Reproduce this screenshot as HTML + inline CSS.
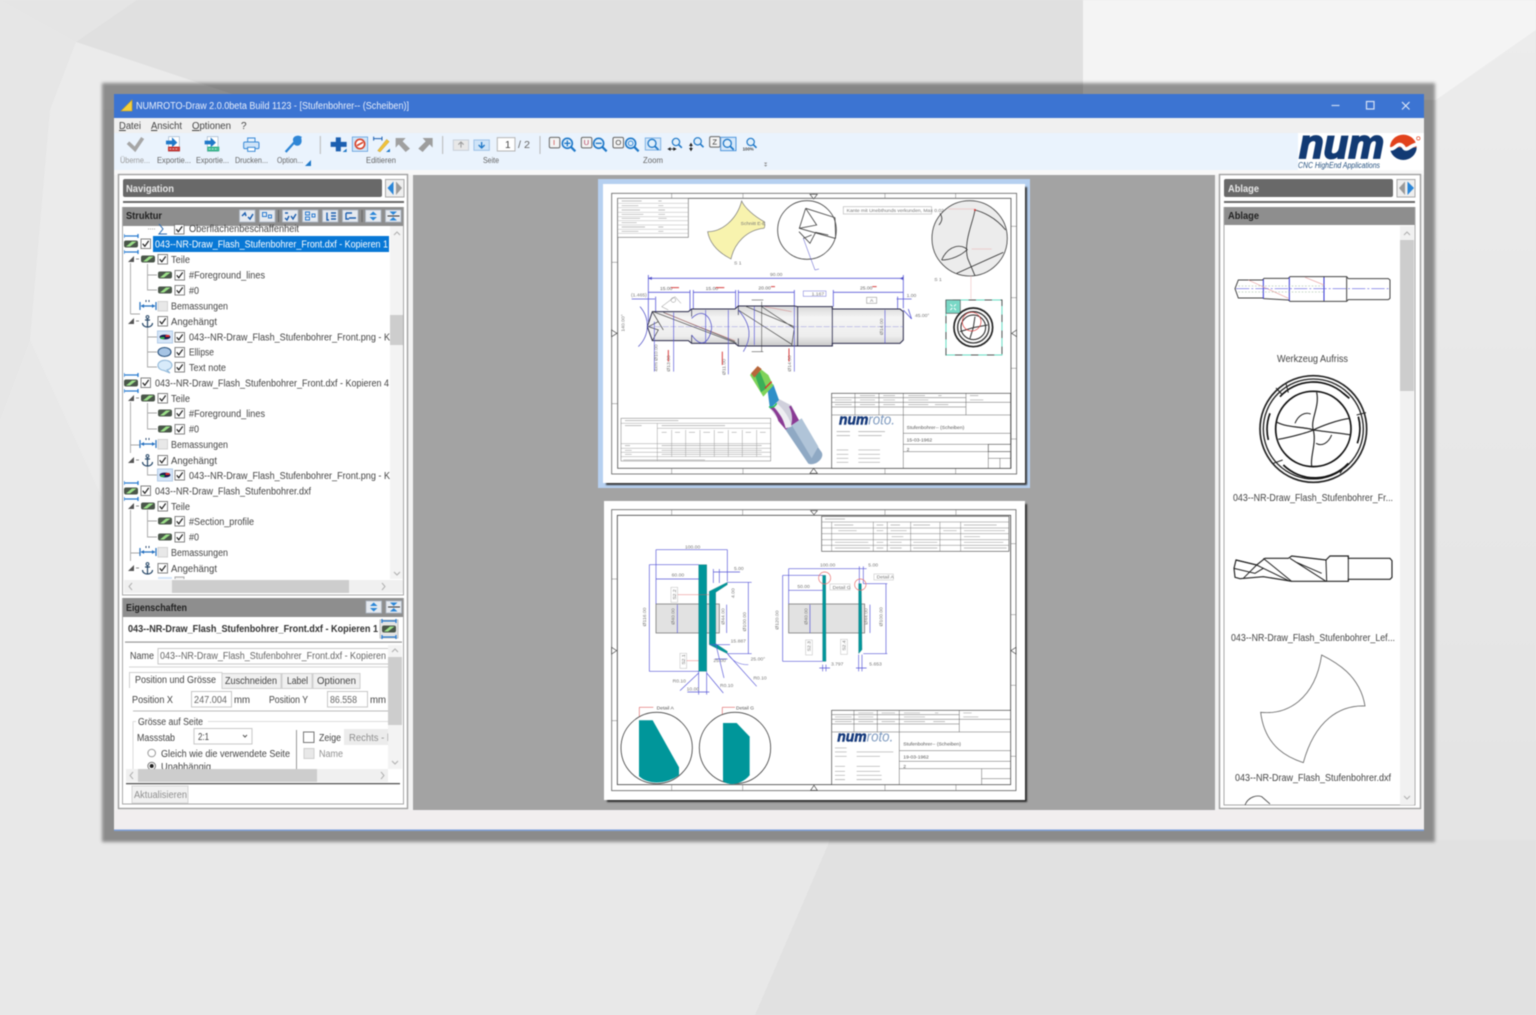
<!DOCTYPE html>
<html lang="de"><head><meta charset="utf-8"><title>NUMROTO-Draw</title>
<style>
html,body{margin:0;padding:0;width:1536px;height:1015px;overflow:hidden;background:#e8e8e8}
svg{display:block;filter:blur(.4px)}
text{font-family:"Liberation Sans",sans-serif;font-size:10px;fill:#444}
.b{font-weight:700}
.h{font-weight:700;fill:#e8e8e8}
.d{fill:#222;font-weight:700}
.g{fill:#8f8f8f}
.t{font-size:8px;fill:#666}
.tiny{font-size:15px;fill:#777}
.mic{font-size:10px;fill:#999}
.dm{fill:none;stroke:#5858d8;stroke-width:2.4}
.k{fill:none;stroke:#444;stroke-width:2.5}
.f{fill:none;stroke:#888;stroke-width:1.5}
</style></head><body>
<svg width="1536" height="1015" viewBox="0 0 1536 1015" xmlns="http://www.w3.org/2000/svg">
<defs>
<filter id="bl" x="-5%" y="-5%" width="110%" height="110%"><feGaussianBlur stdDeviation="1.6"/></filter>
<filter id="b1" x="-5%" y="-5%" width="110%" height="110%"><feGaussianBlur stdDeviation=".9"/></filter>
<linearGradient id="bd" x1="0" y1="0" x2="0" y2="1"><stop offset="0" stop-color="#d8d8d8"/><stop offset=".3" stop-color="#f5f5f5"/><stop offset=".75" stop-color="#eee"/><stop offset="1" stop-color="#c9c9c9"/></linearGradient>
<linearGradient id="sh" x1="0" y1="0" x2="1" y2="0"><stop offset="0" stop-color="#a9c0d8"/><stop offset="1" stop-color="#7d98b5"/></linearGradient>
<linearGradient id="rg" x1="0" y1="0" x2="0" y2="1"><stop offset="0" stop-color="#ececec"/><stop offset="1" stop-color="#e2e2e2"/></linearGradient>
<clipPath id="tc"><rect x="124" y="224" width="266" height="355"/></clipPath>
<clipPath id="pc"><rect x="124" y="645" width="264" height="124"/></clipPath>
<clipPath id="rc"><rect x="1225" y="226" width="175" height="579"/></clipPath>
<g id="ly"><rect x="0" y="-3.5" width="14" height="7" rx="2" fill="#4a564a"/><path d="M2,2.5 L8,-2.5 L12.5,-2.5 L6,2.5Z" fill="#9be088"/></g>
<g id="l0"><use href="#ly"/><path d="M0,-8H14M0,8H14M0,-10V-6M14,-10V-6M0,6V10M14,6V10" stroke="#2a7cd0" stroke-width="1.3" fill="none"/></g>
<g id="cb"><rect x=".5" y="-4.5" width="9.5" height="9.5" fill="#fff" stroke="#777" stroke-width=".9"/><path d="M2.2,.2 L4.3,2.8 L8.2,-2.6" stroke="#222" stroke-width="1.2" fill="none"/></g>
<g id="cg"><rect x=".5" y="-4.5" width="9.5" height="9.5" fill="#e8e8e8" stroke="#d2d2d2"/></g>
<g id="tr"><path d="M0,3 L6,3 L6,-3Z" fill="#555"/><path d="M8,0H11" stroke="#888"/></g>
<g id="dm"><path d="M0,-4V4M16,-4V4M1,0H15" stroke="#2470c0" stroke-width="1.2"/><path d="M1,0L4,-2V2ZM15,0L12,-2V2Z" fill="#2470c0"/><path d="M6,-6V-4M9,-6V-4" stroke="#2a4a70"/></g>
<g id="an"><circle cx="0" cy="-5" r="1.4" fill="none" stroke="#2a4a6a"/><path d="M0,-4V5M-2.5,-2H2.5M-5,1C-5,4 -2,5 0,5C2,5 5,4 5,1" stroke="#2a4a6a" stroke-width="1.2" fill="none"/></g>
<g id="pn"><rect x="0" y="-6" width="15" height="12" fill="#d6e6f8" stroke="#b3cce8"/><ellipse cx="7.5" cy="0" rx="5.5" ry="2.4" fill="#1a1a50"/><path d="M3,0h4v2h-4z" fill="#2db04a"/><path d="M8,-2h4v2h-4z" fill="#d82a2a"/></g>
<g id="bt"><rect x="0" y="0" width="15.5" height="12" fill="#e6eaf0" stroke="#aeb8c6" stroke-width=".8"/></g>
<g id="ud"><rect x="0" y="0" width="15.5" height="12" fill="#e6eaf0" stroke="#aeb8c6" stroke-width=".8"/><path d="M7.7,1.5L11.5,5H4ZM7.7,10.5L11.5,7H4Z" fill="#2a86d8"/></g>
<g id="cl"><rect x="0" y="0" width="15.5" height="12" fill="#e6eaf0" stroke="#aeb8c6" stroke-width=".8"/><path d="M2,6H14" stroke="#333" stroke-width="1"/><path d="M7.7,5L11.5,1.5H4ZM7.7,7L11.5,10.5H4Z" fill="#2a86d8"/></g>
<g id="mg"><circle cx="0" cy="0" r="5" fill="#e0effb" stroke="#1f78c8" stroke-width="1.6"/><path d="M3.5,3.5L8,8" stroke="#1f78c8" stroke-width="2.2"/></g>
<g id="bx"><rect x="0" y="0" width="10.5" height="10.5" rx="1.5" fill="#f4f4f4" stroke="#666" stroke-width="1"/></g>
</defs>

<!-- background -->
<rect width="1536" height="1015" fill="#e8e8e8"/>
<polygon points="0,0 137,0 76,42" fill="#e5e5e5"/>
<polygon points="137,0 1083,0 1083,100 250,100 76,42" fill="#e0e0e0"/>
<polygon points="0,0 76,42 50,110 30,340 0,420" fill="#e6e6e6"/>
<polygon points="76,42 250,100 103,110 50,110" fill="#ebebeb"/>
<polygon points="50,110 103,110 103,500 30,340" fill="#ebebeb"/>
<polygon points="1083,0 1536,0 1536,30 1436,100 1083,100" fill="#f4f4f4"/>
<polygon points="1536,30 1436,100 1436,1015 1536,1015" fill="url(#rg)"/>
<polygon points="830,840 1536,840 1536,1015 755,1015" fill="#e1e1e1"/>

<!-- window shadow -->
<rect x="102" y="83" width="1333" height="759" fill="#000" fill-opacity=".4" filter="url(#bl)"/>

<!-- window -->
<rect x="114" y="94" width="1310" height="737" fill="#f3f3f3"/>
<rect x="114" y="94" width="1310" height="24" fill="#3c74d2"/>
<rect x="114" y="118" width="1310" height="15" fill="#f0f0f0"/>
<rect x="114" y="133" width="1310" height="37" fill="#eaf3fd"/>
<rect x="114" y="170" width="1310" height="5" fill="#f8f8f8"/>
<rect x="114" y="810" width="1310" height="20" fill="#f1eeef"/>
<rect x="114" y="829.5" width="1310" height="1.5" fill="#7d9fd8"/>

<!-- title -->
<polygon points="121,111 132,100 132,111" fill="#f5cf3a" stroke="#c9a020" stroke-width=".6"/>
<text x="136" y="109" style="fill:#e8effb" textLength="273" lengthAdjust="spacingAndGlyphs">NUMROTO-Draw 2.0.0beta Build 1123 - [Stufenbohrer-- (Scheiben)]</text>
<path d="M1331.5,105.5H1339.5" stroke="#c8d8f2" stroke-width="1.2"/>
<rect x="1366.5" y="101.5" width="7.5" height="7.5" fill="none" stroke="#d6e2f6" stroke-width="1.2"/>
<path d="M1402,102L1409.5,109.5M1409.5,102L1402,109.5" stroke="#dbe6f7" stroke-width="1.2"/>

<!-- menu -->
<g fill="#444">
<text x="119" y="129" textLength="22" lengthAdjust="spacingAndGlyphs"><tspan text-decoration="underline">D</tspan>atei</text>
<text x="151" y="129" textLength="31" lengthAdjust="spacingAndGlyphs"><tspan text-decoration="underline">A</tspan>nsicht</text>
<text x="192" y="129" textLength="39" lengthAdjust="spacingAndGlyphs"><tspan text-decoration="underline">O</tspan>ptionen</text>
<text x="241" y="129">?</text>
</g>

<!-- ribbon -->
<g transform="translate(100,80) scale(.3333)">
<path d="M84,188 L105,208 L128,174" fill="none" stroke="#a6a6a6" stroke-width="11"/>
<rect x="206" y="170" width="32" height="44" fill="#fff" stroke="#9fb2c8" stroke-width="2"/><path d="M198,182H216V172L232,188L216,202V193H198Z" fill="#1f78c8"/><rect x="204" y="200" width="36" height="14" fill="#c4332f"/><path d="M208,207H236" stroke="#f3c0c0" stroke-width="3" stroke-dasharray="6 3"/>
<rect x="322" y="170" width="32" height="44" fill="#fff" stroke="#9fb2c8" stroke-width="2"/><path d="M314,182H332V172L348,188L332,202V193H314Z" fill="#1f78c8"/><rect x="322" y="200" width="36" height="14" fill="#35b58a"/><path d="M326,207H354" stroke="#c5efdf" stroke-width="3" stroke-dasharray="6 3"/>
<rect x="443" y="174" width="22" height="14" fill="#e8f2fc" stroke="#3a8ad6" stroke-width="3"/><rect x="431" y="186" width="46" height="20" rx="4" fill="#cfe4f8" stroke="#3a8ad6" stroke-width="3"/><rect x="443" y="202" width="22" height="12" fill="#fff" stroke="#3a8ad6" stroke-width="3"/>
<path d="M557,216 L584,186 M584,186 C578,172 592,168 600,172 L590,181 L594,187 L601,178 C604,192 592,198 584,190" stroke="#2f86d6" stroke-width="7" fill="#2f86d6"/>
<path d="M661,168V222" stroke="#b8b8b8" stroke-width="3"/>
<path d="M715,172V214M692,193H740" stroke="#1c5fb0" stroke-width="15"/>
<path d="M728,216L740,216L740,206Z" fill="#1f78c8"/>
<rect x="757" y="171" width="46" height="43" fill="#cfe4f8" stroke="#4b92d8" stroke-width="2"/><circle cx="780" cy="192" r="14" fill="#fff" stroke="#d8432a" stroke-width="5"/><path d="M771,197L789,187" stroke="#d8432a" stroke-width="5"/>
<path d="M821,176H846M821,170V182M846,170V182" stroke="#1c5fb0" stroke-width="3"/>
<path d="M833,212L860,178L868,185L840,216Z" fill="#f0c23a" stroke="#a88520" stroke-width="1"/>
<path d="M858,216L870,216L870,206Z" fill="#1f78c8"/>
<path d="M887,174H917L908,184L930,206L917,216L896,193L887,203Z" fill="#a0a0a0"/>
<path d="M998,174H968L977,184L955,206L968,216L989,193L998,203Z" fill="#9d9d9d"/>
<path d="M1028,168V222" stroke="#b8b8b8" stroke-width="3"/>
<rect x="1060" y="180" width="46" height="31" fill="#e8e8e8" stroke="#c8d0da" stroke-width="3"/><path d="M1083,186V203M1075,194L1083,186L1091,194" stroke="#999" stroke-width="3" fill="none"/>
<rect x="1122" y="180" width="46" height="31" fill="#cfe4f8" stroke="#9ec2e8" stroke-width="3"/><path d="M1145,186V203M1136,195L1145,204L1154,195" stroke="#1f78c8" stroke-width="4" fill="none"/>
<rect x="1192" y="173" width="53" height="40" fill="#fff" stroke="#b5b5b5" stroke-width="3"/>
</g>
<text x="505" y="148" style="fill:#444">1</text>
<text x="518" y="148" style="fill:#666" textLength="12" lengthAdjust="spacingAndGlyphs">/ 2</text>
<g transform="translate(520,80) scale(.3333)">
<path d="M60,168V222" stroke="#b8b8b8" stroke-width="3"/>
<use href="#bx" transform="translate(88,172) scale(3)"/><text x="99" y="195" style="font-size:23px;fill:#d05050">I</text><use href="#mg" transform="translate(142,190) scale(3)"/><path d="M133,190H151M142,181V199" stroke="#1f78c8" stroke-width="4"/>
<use href="#bx" transform="translate(184,172) scale(3)"/><text x="191" y="195" style="font-size:23px;fill:#b04060">U</text><use href="#mg" transform="translate(236,190) scale(3)"/><path d="M227,190H245" stroke="#1f78c8" stroke-width="4"/>
<use href="#bx" transform="translate(279,172) scale(3)"/><text x="286" y="195" style="font-size:23px;fill:#444">O</text><use href="#mg" transform="translate(332,190) scale(3)"/><circle cx="332" cy="190" r="7" fill="none" stroke="#3a8ad6" stroke-width="3"/>
<rect x="376" y="174" width="46" height="36" fill="#d6e8fa" stroke="#7eb2e4" stroke-width="3"/><use href="#mg" transform="translate(396,190) scale(2.4)"/>
<use href="#mg" transform="translate(468,186) scale(2.2)"/><path d="M444,207H468M444,207L451,203V211ZM468,207L461,203V211Z" stroke="#222" stroke-width="2"/>
<use href="#mg" transform="translate(533,184) scale(2.2)"/><path d="M513,190V212M513,190L509,197H517ZM513,212L509,205H517Z" stroke="#222" stroke-width="2"/>
<use href="#bx" transform="translate(569,170) scale(3)"/><text x="577" y="193" style="font-size:23px;fill:#333">Z</text><rect x="602" y="172" width="46" height="40" fill="#d6e8fa" stroke="#4f96dc" stroke-width="3"/><use href="#mg" transform="translate(622,190) scale(2.4)"/>
<use href="#mg" transform="translate(692,186) scale(2.2)"/><text x="668" y="212" style="font-size:13px;font-weight:700;fill:#444">100%</text>
<path d="M732,248H742L737,253ZM732,255H742L737,260Z" fill="#888"/>
</g>
<g text-anchor="start">
<text class="t" style="fill:#9a9a9a" x="120" y="163" textLength="30" lengthAdjust="spacingAndGlyphs">Überne...</text>
<text class="t" x="157" y="163" textLength="34" lengthAdjust="spacingAndGlyphs">Exportie...</text>
<text class="t" x="196" y="163" textLength="33" lengthAdjust="spacingAndGlyphs">Exportie...</text>
<text class="t" x="235" y="163" textLength="33" lengthAdjust="spacingAndGlyphs">Drucken...</text>
<text class="t" x="277" y="163" textLength="26" lengthAdjust="spacingAndGlyphs">Option...</text>
<text class="t" x="366" y="163" textLength="30" lengthAdjust="spacingAndGlyphs">Editieren</text>
<text class="t" x="483" y="163" textLength="16" lengthAdjust="spacingAndGlyphs">Seite</text>
<text class="t" x="643" y="163" textLength="20" lengthAdjust="spacingAndGlyphs">Zoom</text>
</g>
<path d="M305,166H311V160Z" fill="#1f78c8"/>

<!-- logo -->
<rect x="1298" y="133" width="126" height="37" fill="#fff"/>
<text x="1299" y="158" style="font-size:41px;font-weight:700;font-style:italic;fill:#123a73;stroke:#123a73;stroke-width:1.8" textLength="85" lengthAdjust="spacingAndGlyphs">num</text>
<text x="1298" y="168" style="font-size:8px;font-style:italic;fill:#24507f" textLength="82" lengthAdjust="spacingAndGlyphs">CNC HighEnd Applications</text>
<g transform="translate(1200,85) scale(.3333)">
<path d="M570,187 A40,38 0 0 1 650,187Z" fill="#e2421c"/>
<path d="M570,187 A40,38 0 0 0 650,187Z" fill="#123a73"/>
<path d="M566,190 C585,200 592,165 610,185 C620,205 635,175 654,178" stroke="#fff" stroke-width="11" fill="none"/>
<circle cx="655" cy="160" r="5" fill="none" stroke="#e2421c" stroke-width="2"/>
</g>

<!-- left panel -->
<rect x="118.5" y="174.5" width="289" height="634" fill="#fff" stroke="#a0a0a0" stroke-width="1.4"/>
<rect x="123" y="179" width="259" height="18" rx="2" fill="#696969"/>
<text class="h" x="126" y="192" textLength="48" lengthAdjust="spacingAndGlyphs">Navigation</text>
<rect x="385.5" y="179.5" width="18.5" height="17.5" fill="#eee" stroke="#a8a8a8"/>
<path d="M393.5,181.5V195L387.5,188Z" fill="#2a86d8"/><path d="M396,181.5V195L402,188Z" fill="#9a9a9a"/>
<rect x="123" y="201" width="281" height="2" fill="#6a6a6a"/>
<rect x="123" y="207" width="280.5" height="19" fill="#8e8e8e"/>
<text class="d" x="126" y="219" textLength="36" lengthAdjust="spacingAndGlyphs">Struktur</text>
<use href="#bt" x="239.5" y="210"/><path d="M242,216L245,213L246,216M248,217L250,219L253,214" stroke="#1c5fb0" stroke-width="1.5" fill="none"/>
<use href="#bt" x="259.5" y="210"/><path d="M262.5,212.5h4v4h-4zM268.5,215h3v3h-3z" fill="none" stroke="#2a7ad0"/>
<path d="M278.5,210V222" stroke="#666"/>
<use href="#bt" x="282.5" y="210"/><path d="M285,213h3M285,218L287,220L289,216M291,216L293,219L296,214" stroke="#1c5fb0" stroke-width="1.4" fill="none"/>
<use href="#bt" x="302.5" y="210"/><path d="M305.5,212h4v3h-4zM305.5,217h4v3h-4zM312,214h3v3h-3z" fill="none" stroke="#2a7ad0"/>
<use href="#bt" x="322.5" y="210"/><path d="M327,212.5V220H329M331,213H336M331,216H336M331,219H336" stroke="#1c5fb0" stroke-width="1.4" fill="none"/>
<use href="#bt" x="342.5" y="210"/><path d="M346,213H352M349,218H356M346,213V219H349" stroke="#1c5fb0" stroke-width="1.4" fill="none"/>
<path d="M362,210V222" stroke="#666"/>
<use href="#ud" x="365.5" y="210"/><use href="#cl" x="385.5" y="210"/>

<!-- tree -->
<g clip-path="url(#tc)">
<rect x="153" y="236" width="236" height="16" fill="#0878d6"/>
<path d="M130.5,263V314M130.5,314H140M147.5,264V290H157M147.5,275H157M147.5,325V367H157M147.5,337H157M147.5,352H157M130.5,402V453M130.5,445H140M147.5,403V429H157M147.5,413H157M147.5,464V475H157M130.5,510V561M130.5,553H140M147.5,510V537H157M147.5,521H157" stroke="#a8a8a8" stroke-width=".9" fill="none"/>
<!-- row clipped top -->
<path d="M148,229H156" stroke="#aaa" stroke-dasharray="1 1"/><path d="M159,224L163,229L159,234H167" stroke="#2a6ab0" fill="none"/>
<use href="#cb" x="174" y="229"/><text x="189" y="232" textLength="110" lengthAdjust="spacingAndGlyphs">Oberflächenbeschaffenheit</text>

<use href="#l0" x="124" y="244"/><use href="#cb" x="140.5" y="243.5"/>
<text x="155" y="247.5" style="fill:#fff" textLength="233" lengthAdjust="spacingAndGlyphs">043--NR-Draw_Flash_Stufenbohrer_Front.dxf - Kopieren 1</text>
<use href="#tr" x="128" y="259"/><use href="#ly" x="141" y="259"/><use href="#cb" x="157.5" y="259"/><text x="171" y="263" textLength="19" lengthAdjust="spacingAndGlyphs">Teile</text>
<use href="#ly" x="158" y="275"/><use href="#cb" x="174.5" y="275"/><text x="189" y="278.5" textLength="76" lengthAdjust="spacingAndGlyphs">#Foreground_lines</text>
<use href="#ly" x="158" y="290"/><use href="#cb" x="174.5" y="290"/><text x="189" y="294" textLength="10" lengthAdjust="spacingAndGlyphs">#0</text>
<use href="#dm" x="140" y="306"/><use href="#cg" x="157.5" y="306"/><text x="171" y="309.5" textLength="57" lengthAdjust="spacingAndGlyphs">Bemassungen</text>
<use href="#tr" x="128" y="321"/><use href="#an" x="147.5" y="322"/><use href="#cb" x="157.5" y="321"/><text x="171" y="325" textLength="46" lengthAdjust="spacingAndGlyphs">Angehängt</text>
<use href="#pn" x="157.5" y="337"/><use href="#cb" x="174.5" y="337"/><text x="189" y="340.5" textLength="201" lengthAdjust="spacingAndGlyphs">043--NR-Draw_Flash_Stufenbohrer_Front.png - K</text>
<ellipse cx="164.5" cy="352" rx="6.5" ry="4.5" fill="#a6c4e4" stroke="#27507c" stroke-width="1.1"/><use href="#cb" x="174.5" y="352"/><text x="189" y="355.5" textLength="25" lengthAdjust="spacingAndGlyphs">Ellipse</text>
<path d="M158,366 a7,5 0 1 1 9,4 l3,3 l-6,-2.5 a7,5 0 0 1 -6,-4.5Z" fill="#d8ebfa" stroke="#8eb6d8"/><use href="#cb" x="174.5" y="367"/><text x="189" y="371" textLength="37" lengthAdjust="spacingAndGlyphs">Text note</text>

<use href="#l0" x="124" y="383"/><use href="#cb" x="140.5" y="382.5"/><text x="155" y="386.5" textLength="234" lengthAdjust="spacingAndGlyphs">043--NR-Draw_Flash_Stufenbohrer_Front.dxf - Kopieren 4</text>
<use href="#tr" x="128" y="398"/><use href="#ly" x="141" y="398"/><use href="#cb" x="157.5" y="398"/><text x="171" y="402" textLength="19" lengthAdjust="spacingAndGlyphs">Teile</text>
<use href="#ly" x="158" y="413"/><use href="#cb" x="174.5" y="413"/><text x="189" y="417" textLength="76" lengthAdjust="spacingAndGlyphs">#Foreground_lines</text>
<use href="#ly" x="158" y="429"/><use href="#cb" x="174.5" y="429"/><text x="189" y="432.5" textLength="10" lengthAdjust="spacingAndGlyphs">#0</text>
<use href="#dm" x="140" y="444"/><use href="#cg" x="157.5" y="444"/><text x="171" y="448" textLength="57" lengthAdjust="spacingAndGlyphs">Bemassungen</text>
<use href="#tr" x="128" y="460"/><use href="#an" x="147.5" y="461"/><use href="#cb" x="157.5" y="460"/><text x="171" y="464" textLength="46" lengthAdjust="spacingAndGlyphs">Angehängt</text>
<use href="#pn" x="157.5" y="475"/><use href="#cb" x="174.5" y="475"/><text x="189" y="479" textLength="201" lengthAdjust="spacingAndGlyphs">043--NR-Draw_Flash_Stufenbohrer_Front.png - K</text>

<use href="#l0" x="124" y="491"/><use href="#cb" x="140.5" y="490.5"/><text x="155" y="494.5" textLength="156" lengthAdjust="spacingAndGlyphs">043--NR-Draw_Flash_Stufenbohrer.dxf</text>
<use href="#tr" x="128" y="506"/><use href="#ly" x="141" y="506"/><use href="#cb" x="157.5" y="506"/><text x="171" y="510" textLength="19" lengthAdjust="spacingAndGlyphs">Teile</text>
<use href="#ly" x="158" y="521"/><use href="#cb" x="174.5" y="521"/><text x="189" y="525" textLength="65" lengthAdjust="spacingAndGlyphs">#Section_profile</text>
<use href="#ly" x="158" y="537"/><use href="#cb" x="174.5" y="537"/><text x="189" y="540.5" textLength="10" lengthAdjust="spacingAndGlyphs">#0</text>
<use href="#dm" x="140" y="552"/><use href="#cg" x="157.5" y="552"/><text x="171" y="556" textLength="57" lengthAdjust="spacingAndGlyphs">Bemassungen</text>
<use href="#tr" x="128" y="568"/><use href="#an" x="147.5" y="569"/><use href="#cb" x="157.5" y="568"/><text x="171" y="572" textLength="46" lengthAdjust="spacingAndGlyphs">Angehängt</text>
<rect x="158" y="577" width="14" height="6" fill="#d6e6f8"/><rect x="175" y="577" width="9" height="6" fill="#eee" stroke="#aaa"/>
</g>
<!-- tree scrollbars -->
<rect x="390" y="226" width="13" height="353" fill="#f3f3f3"/>
<rect x="390" y="315" width="13" height="30" fill="#cdcdcd"/>
<path d="M394,235L397,232L400,235M394,572L397,575L400,572" stroke="#b0b0b0" fill="none"/>
<rect x="124" y="580" width="279" height="13" fill="#f0f0f0"/>
<rect x="172" y="580" width="177" height="13" fill="#cdcdcd"/>
<path d="M132,583L129,586.5L132,590M382,583L385,586.5L382,590" stroke="#b0b0b0" fill="none"/>
<path d="M122.5,207V595H403.5V207" stroke="#a8a8a8" fill="none"/>

<!-- properties -->
<rect x="123" y="598" width="280" height="19" fill="#8e8e8e"/>
<text class="d" x="126" y="611" textLength="61" lengthAdjust="spacingAndGlyphs">Eigenschaften</text>
<use href="#ud" x="366" y="601"/><use href="#cl" x="386" y="601"/>
<text class="b" x="128" y="632" style="fill:#333" textLength="250" lengthAdjust="spacingAndGlyphs">043--NR-Draw_Flash_Stufenbohrer_Front.dxf - Kopieren 1</text>
<rect x="380" y="620" width="18" height="18" fill="#e4e4e4" stroke="#c4c4c4"/><use href="#l0" x="382" y="629"/>
<rect x="125" y="641.5" width="277" height="1.2" fill="#999"/>
<g clip-path="url(#pc)">
<text x="130" y="659" textLength="24" lengthAdjust="spacingAndGlyphs">Name</text>
<rect x="158" y="648.5" width="232" height="15.5" fill="#fff" stroke="#c8c8c8"/>
<text x="160" y="659" style="fill:#666" textLength="226" lengthAdjust="spacingAndGlyphs">043--NR-Draw_Flash_Stufenbohrer_Front.dxf - Kopieren</text>
<path d="M129,667H388" stroke="#d4d4d4"/>
<path d="M129.5,688V672.5H222V688" fill="#fff" stroke="#cfcfcf"/>
<rect x="222" y="673.5" width="59" height="15" fill="#f0f0f0" stroke="#cfcfcf"/>
<rect x="282" y="673.5" width="30" height="15" fill="#f0f0f0" stroke="#cfcfcf"/>
<rect x="313" y="673.5" width="47" height="15" fill="#f0f0f0" stroke="#cfcfcf"/>
<text x="135" y="683" textLength="81" lengthAdjust="spacingAndGlyphs">Position und Grösse</text>
<text x="225" y="684" textLength="52" lengthAdjust="spacingAndGlyphs">Zuschneiden</text>
<text x="287" y="684" textLength="21" lengthAdjust="spacingAndGlyphs">Label</text>
<text x="317" y="684" textLength="39" lengthAdjust="spacingAndGlyphs">Optionen</text>
<text x="132" y="703" textLength="41" lengthAdjust="spacingAndGlyphs">Position X</text>
<rect x="191.5" y="691.5" width="40" height="15.5" fill="#fff" stroke="#c8c8c8"/>
<text x="194" y="703" style="fill:#666" textLength="33" lengthAdjust="spacingAndGlyphs">247.004</text>
<text x="234" y="703" textLength="16" lengthAdjust="spacingAndGlyphs">mm</text>
<text x="269" y="703" textLength="39" lengthAdjust="spacingAndGlyphs">Position Y</text>
<rect x="327.5" y="691.5" width="40" height="15.5" fill="#fff" stroke="#c8c8c8"/>
<text x="330" y="703" style="fill:#666" textLength="27" lengthAdjust="spacingAndGlyphs">86.558</text>
<text x="370" y="703" textLength="16" lengthAdjust="spacingAndGlyphs">mm</text>
<path d="M133,711H388" stroke="#bcbcbc"/>
<path d="M208,721.5H388M133,721.5H136M133,721.5V769" stroke="#dcdcdc" fill="none"/>
<text x="138" y="725" textLength="65" lengthAdjust="spacingAndGlyphs">Grösse auf Seite</text>
<text x="137" y="741" textLength="38" lengthAdjust="spacingAndGlyphs">Massstab</text>
<rect x="194" y="728.5" width="58" height="15.5" fill="#fff" stroke="#c8c8c8"/>
<text x="198" y="740" textLength="11" lengthAdjust="spacingAndGlyphs">2:1</text>
<path d="M243,735L245,737L247,735" stroke="#555" fill="none"/>
<circle cx="151.7" cy="753" r="3.8" fill="#fff" stroke="#999"/>
<text x="161" y="757" textLength="129" lengthAdjust="spacingAndGlyphs">Gleich wie die verwendete Seite</text>
<circle cx="151.7" cy="766" r="3.8" fill="#fff" stroke="#777"/><circle cx="151.7" cy="766" r="2" fill="#222"/>
<text x="161" y="770" textLength="50" lengthAdjust="spacingAndGlyphs">Unabhängig</text>
<path d="M296.5,730V769" stroke="#999"/>
<rect x="303.5" y="732" width="10.5" height="10.5" fill="#fff" stroke="#777"/>
<text x="319" y="741" textLength="22" lengthAdjust="spacingAndGlyphs">Zeige</text>
<rect x="344" y="729" width="46" height="16" fill="#ececec"/>
<text x="349" y="741" class="g" textLength="40" lengthAdjust="spacingAndGlyphs">Rechts - l</text>
<rect x="304" y="748.5" width="10" height="10" fill="#e8e8e8" stroke="#cfcfcf"/>
<text x="319" y="757" class="g" textLength="24" lengthAdjust="spacingAndGlyphs">Name</text>
</g>
<rect x="388" y="645" width="14" height="124" fill="#f3f3f3"/>
<rect x="388" y="657" width="14" height="68" fill="#cdcdcd"/>
<path d="M392,652L395,649L398,652M392,761L395,764L398,761" stroke="#b0b0b0" fill="none"/>
<rect x="126" y="769" width="262" height="13" fill="#f0f0f0"/>
<rect x="138" y="769" width="179" height="13" fill="#cdcdcd"/>
<path d="M133,772L130,775.5L133,779M381,772L384,775.5L381,779" stroke="#b0b0b0" fill="none"/>
<rect x="126" y="783" width="274" height="1.3" fill="#555"/>
<rect x="132" y="786" width="56" height="17" fill="#f1f1f1" stroke="#d6d6d6"/>
<text x="134" y="798" class="g" textLength="53" lengthAdjust="spacingAndGlyphs">Aktualisieren</text>
<path d="M122.5,598V804H403.5V598" stroke="#a8a8a8" fill="none"/>

<!-- canvas -->
<rect x="413" y="175" width="802" height="635" fill="#a3a3a3"/>

<!-- page 1 -->
<rect x="598" y="179" width="432" height="309" fill="#b6d0f0"/>
<rect x="606" y="187" width="421" height="298" fill="#333" filter="url(#b1)"/>
<rect x="603" y="184" width="422" height="299" fill="#fff"/>
<g transform="translate(595,175) scale(.3333)">
<rect x="50" y="55" width="1215" height="842" class="f" style="stroke:#666;stroke-width:2.5"/>
<rect x="68" y="70" width="1180" height="810" class="f" style="stroke:#555;stroke-width:2.5"/>
<path d="M230,55V70M444,55V70M656,55V70M870,55V70M1082,55V70M230,880V897M444,880V897M870,880V897M1082,880V897M50,262H68M50,474H68M50,686H68M1248,154H1265M1248,368H1265M1248,580H1265M1248,792H1265" stroke="#777" stroke-width="1.5"/>
<path d="M645,58H667L656,72ZM645,895H667L656,880ZM50,465V485L66,475ZM1265,465V485L1250,475Z" fill="#fff" stroke="#444" stroke-width="2"/>
<rect x="68" y="70" width="212" height="117" fill="#fff" stroke="#777" stroke-width="2"/>
<path d="M68,85H280M68,98H280M68,112H280M68,125H280M68,137H280M68,150H280M68,163H280M68,175H280" stroke="#aaa" stroke-width="1.3"/>
<path d="M80,78H140M80,92H130M80,105H135M80,118H145M80,130H135M80,143H125M80,156H150M80,169H130M190,78H200M190,92H205M190,105H210M190,118H210M190,130H215M190,156H205M190,169H205" stroke="#aaa" stroke-width="2"/>
<path d="M440,78 C450,100 480,125 508,140 C510,150 510,158 506,160 C455,165 418,205 408,252 C375,235 345,210 338,170 C380,170 425,135 440,78Z" fill="#f8f3ae" stroke="#777" stroke-width="2"/>
<text x="437" y="150" class="tiny">Schnitt E-E</text>
<text x="417" y="268" class="tiny">S 1</text>
<circle cx="636" cy="165" r="88" fill="#fff" stroke="#444" stroke-width="2.5"/>
<path d="M632,100 L720,128 M632,100 L613,160 L720,190 M632,100 L665,150 L613,160 M720,128 L722,190 M612,170 L645,205 L662,172 L700,180 M625,190L650,180" class="k"/>
<path d="M625,190 L660,285 L672,282" stroke="#5050c8" stroke-width="1.5" fill="none"/>
<rect x="745" y="95" width="265" height="22" fill="#fff" stroke="#bbb" stroke-width="2"/>
<text x="755" y="111" class="tiny">Kante mit Unebthunds verkunden, Max 0.02</text>
<circle cx="1124" cy="190" r="113" fill="#ececec" stroke="#444" stroke-width="2.5"/>
<path d="M1035,115 C1045,130 1040,140 1032,150 M1140,105 C1160,110 1200,125 1232,165 M1140,105 C1135,140 1105,200 1118,250 L1140,302 M1040,255 C1060,210 1100,205 1118,225 M1040,255 C1070,255 1100,240 1115,225 M1085,295 L1225,232" stroke="#333" stroke-width="2.5" fill="none"/>
<path d="M1060,102H1140M1130,222H1190M1128,302V372" stroke="#e8a0a0" stroke-width="1.2"/>
<circle cx="1140" cy="105" r="3" fill="#d83030"/>
<text x="1018" y="318" class="tiny">S 1</text>

<!-- dims -->
<path d="M160,310H925M160,300V440M925,300V400M160,352H285M295,352H422M430,352H598M715,352H925M285,345V410M295,345V405M422,345V400M430,345V395M598,345V395M715,345V395M925,345V400M110,372H180M905,372H950M160,365V400M182,365V410M908,365V400M925,365V400" class="dm"/>
<path d="M160,305V315M925,305V315L915,310M160,310L170,306V314Z" fill="#5050c8" stroke="#5050c8"/>
<text x="525" y="303" class="tiny">90.00</text>
<text x="195" y="345" class="tiny" style="fill:#666">15.00</text><text x="332" y="345" class="tiny" style="fill:#666">15.00</text><text x="490" y="343" class="tiny" style="fill:#666">20.00</text><text x="795" y="343" class="tiny" style="fill:#666">25.00</text>
<path d="M228,338H252M362,338H388M528,335H540M832,335H845" stroke="#d84040" stroke-width="3"/>
<text x="108" y="365" class="tiny">(1.465)</text><text x="935" y="366" class="tiny">1.00</text>
<rect x="625" y="348" width="68" height="16" fill="#fff" stroke="#7070d8" stroke-width="1.5"/><text x="650" y="362" class="tiny">1.167</text>
<rect x="815" y="367" width="30" height="18" fill="#fff" stroke="#888" stroke-width="1.5"/><text x="825" y="381" class="tiny">A</text>
<path d="M157,455 L172,410 L280,410 L290,402 L420,402 L430,393 L598,393 L608,395 L712,395 L712,402 L915,402 L925,410 L925,495 L915,505 L712,505 L712,513 L598,513 L430,513 L420,505 L290,505 L280,497 L172,497Z" fill="url(#bd)" stroke="#2a2a4a" stroke-width="3"/>
<path d="M608,395V513M712,395V513" stroke="#2a2a4a" stroke-width="2.5" fill="none"/>
<path d="M430,393V420M430,490V513M290,402V425M290,480V505" stroke="#2a2a4a" stroke-width="2" fill="none"/>
<path d="M175,410 L425,505 M205,412 L420,500 M500,395 L598,460 L590,513 M430,405 L590,508 M450,393 L598,455" stroke="#444" stroke-width="2" fill="none"/>
<path d="M210,415 L420,497 M510,395 L590,410" stroke="#d08080" stroke-width="1.5" fill="none"/>
<path d="M172,410 L190,440 L160,455 L190,465 L172,497 M190,440 L205,465" stroke="#333" stroke-width="2" fill="none"/>
<path d="M430,405 C470,450 470,490 445,530 M290,430 C325,395 350,430 350,460 C345,490 325,530 290,480 M135,395 C165,430 165,480 130,515" stroke="#5050c8" stroke-width="2.2" fill="none"/>
<path d="M157,455H925" stroke="#6a6ad8" stroke-width="1" stroke-dasharray="18 5"/>
<path d="M500,380V530M470,375H505M470,530H505" stroke="#333" stroke-width="1.5"/>
<path d="M178,440V590M236,412V590M400,405V598M598,395V590M870,405V505M332,405V505M478,395V510" stroke="#5858d8" stroke-width="2"/>
<text transform="translate(88,470) rotate(-90)" class="tiny">140.00°</text>
<text transform="translate(188,590) rotate(-90)" class="tiny">4xm Ø10.00</text>
<text transform="translate(225,590) rotate(-90)" class="tiny">Ø13.00</text>
<text transform="translate(392,600) rotate(-90)" class="tiny">Ø11.00</text>
<text transform="translate(588,590) rotate(-90)" class="tiny">Ø14.00</text>
<text transform="translate(864,480) rotate(-90)" class="tiny">Ø14.00</text>
<path d="M220,525V560M382,530V570M582,520V560" stroke="#d84040" stroke-width="3" fill="none"/>
<path d="M925,405 L950,432 M940,402L950,432" class="dm"/><text x="960" y="426" class="tiny">45.00°</text>
<path d="M200,395 L240,365 L258,385 M200,395L220,405" stroke="#888" stroke-width="1.5" fill="none"/><circle cx="235" cy="375" r="7" fill="none" stroke="#888" stroke-width="1.5"/>

<!-- mini view -->
<rect x="1053" y="375" width="168" height="165" fill="#fff" stroke="#66ddc4" stroke-width="3"/>
<path d="M1053,375V540H1221V375H1053" fill="none" stroke="#555" stroke-width="3" stroke-dasharray="22 26"/>
<rect x="1053" y="375" width="43" height="40" fill="#79d8c6" stroke="#555" stroke-width="2"/>
<path d="M1066,388l6,6M1083,388l-6,6M1066,405l6,-6M1083,405l-6,-6" stroke="#fff" stroke-width="3"/>
<circle cx="1135" cy="457" r="58" fill="#fff" stroke="#222" stroke-width="5"/><circle cx="1135" cy="457" r="47" fill="none" stroke="#333" stroke-width="4"/><circle cx="1135" cy="457" r="37" fill="none" stroke="#222" stroke-width="3"/>
<path d="M1140,425 L1135,458 L1125,490 M1095,470 L1135,458 L1178,450" stroke="#333" stroke-width="3" fill="none"/>
<circle cx="1130" cy="440" r="28" fill="none" stroke="#e03a3a" stroke-width="2"/>

<!-- 3d drill -->
<path d="M570,762 L612,736 L680,832 C690,850 660,875 640,866Z" fill="#8fa9c4"/>
<path d="M590,750 L620,730 L670,815 L650,850Z" fill="#b0c4d8"/>
<path d="M525,700 L552,672 L590,692 L612,736 L572,764Z" fill="#d0d0dc"/>
<path d="M525,700 C535,705 545,720 550,738 L572,764 L580,758 C565,735 550,710 535,695Z" fill="#8a3a94"/>
<path d="M588,692 L612,736 L588,752 C595,730 590,710 582,695Z" fill="#8a3a94"/>
<path d="M540,680 C565,700 585,730 590,755 L572,760 C565,730 550,705 530,690Z" fill="#eeeef2"/>
<path d="M517,640 L535,628 L552,675 L525,702Z" fill="#2f8fc8"/>
<path d="M465,600 L488,575 L520,600 L535,632 L505,665Z" fill="#7fd35a"/>
<path d="M480,600 L495,590 L515,640 L498,652Z" fill="#3aae58"/>
<path d="M468,595L488,573L500,582L478,608Z" fill="#b8663a"/>
<path d="M510,640L530,620" stroke="#e03030" stroke-width="4"/>
<path d="M522,695 C530,700 540,695 545,685" stroke="#22c050" stroke-width="4" fill="none"/>

<!-- title block -->
<rect x="710" y="655" width="537" height="225" fill="#fff" stroke="#444" stroke-width="2"/>
<path d="M710,668H1113M710,682H1247M710,696H1113M710,720H1247M925,720V880M780,655V720M852,655V720M925,655V720M1113,655V720M925,775H1247M925,808H1180M925,830H1180M1180,808V880M1180,850H1247M1215,850V880" stroke="#666" stroke-width="1.5" fill="none"/>
<path d="M720,675H770M720,689H770M795,662H840M795,675H840M795,689H840M865,662H900M865,675H900M865,689H900M940,662H990M940,675H1000M940,689H1000M1020,689H1060M1030,662H1040M1125,662H1150M1125,675H1165M725,770H765M725,782H765M790,770H870M790,782H860M725,825H760M725,838H760M725,850H760M725,862H760M790,825H855M790,838H855M790,850H855M790,862H855" stroke="#aaa" stroke-width="2"/>
<text x="732" y="748" style="font-size:44px;font-weight:700;font-style:italic;fill:#14387a;stroke:#14387a;stroke-width:1.5" textLength="88" lengthAdjust="spacingAndGlyphs">num</text>
<text x="820" y="748" style="font-size:44px;font-style:italic;fill:#7f9bc0" textLength="80" lengthAdjust="spacingAndGlyphs">roto.</text>
<text x="935" y="762" style="font-size:15px;fill:#555">Stufenbohrer-- (Scheiben)</text>
<text x="935" y="800" style="font-size:15px;fill:#555">15-03-1962</text>
<text x="935" y="828" style="font-size:15px;fill:#555">2</text>
<rect x="1180" y="808" width="67" height="22" fill="#fff" stroke="#555" stroke-width="2"/>

<!-- bottom-left table -->
<rect x="78" y="730" width="449" height="128" fill="#fff" stroke="#777" stroke-width="1.5"/>
<path d="M78,745H527M187,745V858M187,760H527M78,806H527M78,820H527M78,832H527M78,845H527M230,765V845M272,765V845M315,765V845M358,765V845M400,765V845M442,765V845M485,765V845" stroke="#888" stroke-width="1.2"/>
<path d="M90,737H250M90,752H140M200,752H390M200,772H215M240,772H255M282,772H300M325,772H345M368,772H385M410,772H425M452,772H468M495,772H512M90,812H105M90,826H110M90,838H110M200,812H500M200,826H500M200,838H500M85,855H330" stroke="#aaa" stroke-width="2"/>
</g>

<!-- page 2 -->
<rect x="607" y="504" width="420" height="298" fill="#2a2a2a" filter="url(#b1)"/>
<rect x="604" y="501" width="421" height="299" fill="#fff"/>
<g transform="translate(600,498) scale(.3333)">
<rect x="35" y="35" width="1213" height="843" fill="none" stroke="#666" stroke-width="2.5"/>
<rect x="52" y="52" width="1180" height="808" fill="none" stroke="#444" stroke-width="2.5"/>
<path d="M215,35V52M428,35V52M855,35V52M1068,35V52M215,860V878M428,860V878M855,860V878M1068,860V878M35,243H52M35,668H52M1232,137H1248M1232,350H1248M1232,562H1248M1232,775H1248" stroke="#777" stroke-width="1.5"/>
<path d="M632,38H652L642,50ZM632,877H652L642,862ZM35,448V468L50,458ZM1248,448V468L1233,458Z" fill="#fff" stroke="#444" stroke-width="2"/>
<rect x="665" y="55" width="562" height="105" fill="#fff" stroke="#555" stroke-width="2"/>
<path d="M665,72H1227M665,90H1227M665,107H1227M665,125H1227M665,142H1227M695,72V160M820,72V160M862,72V160M932,72V160M1020,72V160M1082,72V160" stroke="#777" stroke-width="1.4"/>
<path d="M675,63H735M703,81H760M830,81H850M872,81H900M940,81H990M1092,81H1190M715,98H770M830,98H850M872,98H920M1030,98H1070M1092,98H1215M875,116H910M1092,116H1140M705,133H805M830,133H850M870,133H905M940,133H1012M1092,133H1210M705,150H810M830,150H850M870,150H905M940,150H1012M1092,150H1220" stroke="#aaa" stroke-width="2"/>

<!-- left part -->
<rect x="168" y="318" width="190" height="87" fill="#e2e2e2" stroke="#666" stroke-width="2"/>
<rect x="296" y="200" width="24" height="320" fill="#00969a" stroke="#1a7276"/>
<path d="M382,253 L328,280 L328,440 L382,467 L382,460 L347,437 L347,283 L382,260Z" fill="#00969a" stroke="#1a7276"/>
<path d="M148,200V520M148,200H296M148,520H296M168,155H382M168,155V318M382,155V250M168,243H296M340,213V255M358,213V255M340,222H420M382,253H455M382,467H455M445,253V467M380,320V405M232,320V405M330,440H390M320,520V590M296,520V590M262,582H328M345,483H382M382,467L470,565M347,437L372,540M296,525L240,578M320,525L370,585" stroke="#5858d8" stroke-width="2" fill="none"/>
<path d="M382,467A70,70 0 0 0 445,500" stroke="#5858d8" stroke-width="1.5" fill="none"/>
<text x="255" y="151" class="tiny">100.00</text><text x="215" y="236" class="tiny">60.00</text><text x="402" y="216" class="tiny">5.00</text><text x="392" y="434" class="tiny">15.887</text><text x="340" y="492" class="tiny">25.00</text><text x="452" y="487" class="tiny">25.00°</text><text x="460" y="544" class="tiny">R0.10</text><text x="360" y="567" class="tiny">R0.10</text><text x="218" y="553" class="tiny">R0.10</text><text x="260" y="577" class="tiny">10.00</text>
<text transform="translate(138,385) rotate(-90)" class="tiny">Ø116.00</text><text transform="translate(224,380) rotate(-90)" class="tiny">Ø40.00</text><text transform="translate(374,380) rotate(-90)" class="tiny">Ø44.00</text><text transform="translate(438,400) rotate(-90)" class="tiny">Ø100.00</text><text transform="translate(404,300) rotate(-90)" class="tiny">4.00</text>
<rect x="213" y="268" width="20" height="45" fill="#fff" stroke="#ccc" stroke-width="2"/><text transform="translate(228,305) rotate(-90)" class="tiny">S2.2</text>
<rect x="240" y="466" width="20" height="45" fill="#fff" stroke="#ccc" stroke-width="2"/><text transform="translate(255,500) rotate(-90)" class="tiny">S2.1</text>
<path d="M233,290H328M260,488H296" stroke="#e06060" stroke-width="1.2"/>

<!-- right part -->
<rect x="566" y="318" width="228" height="87" fill="#e2e2e2" stroke="#666" stroke-width="2"/>
<path d="M668,232 L677,232 L678,490 L668,490Z" fill="#00969a" stroke="#1a7276"/>
<path d="M776,257 L784,257 L786,455 L776,467Z" fill="#00969a" stroke="#1a7276"/>
<path d="M548,232V490M548,232H668M548,490H668M566,212H778M566,212V318M778,205V257M790,205V257M770,212H800M566,277H668M630,320V405M668,500V520M678,500V520M658,510H690M776,470V520M786,470V520M768,510H800M790,257H862M790,467H862M858,257V467M810,320V405" stroke="#5858d8" stroke-width="2" fill="none"/>
<text x="660" y="206" class="tiny">100.00</text><text x="805" y="206" class="tiny">5.00</text><text x="592" y="270" class="tiny">50.00</text><text x="693" y="503" class="tiny">3.797</text><text x="808" y="503" class="tiny">5.653</text>
<text transform="translate(535,395) rotate(-90)" class="tiny">Ø120.00</text><text transform="translate(622,380) rotate(-90)" class="tiny">Ø40.00</text><text transform="translate(803,380) rotate(-90)" class="tiny">Ø44.00</text><text transform="translate(848,385) rotate(-90)" class="tiny">Ø100.00</text>
<circle cx="674" cy="240" r="18" fill="none" stroke="#e87070" stroke-width="2"/><circle cx="781" cy="260" r="17" fill="none" stroke="#e87070" stroke-width="2"/>
<rect x="690" y="258" width="60" height="18" fill="#fff" stroke="#ccc" stroke-width="2"/><text x="698" y="273" class="tiny">Detail G</text>
<rect x="822" y="228" width="58" height="18" fill="#fff" stroke="#ccc" stroke-width="2"/><text x="830" y="242" class="tiny">Detail A</text>
<rect x="617" y="426" width="20" height="45" fill="#fff" stroke="#ccc" stroke-width="2"/><text transform="translate(632,460) rotate(-90)" class="tiny">S2.3</text>
<rect x="722" y="424" width="20" height="45" fill="#fff" stroke="#ccc" stroke-width="2"/><text transform="translate(737,458) rotate(-90)" class="tiny">S2.4</text>

<!-- details -->
<circle cx="170" cy="750" r="107" fill="#fff" stroke="#444" stroke-width="2.5"/>
<path d="M117,667 L158,667 L237,808 L237,832 C205,855 150,865 117,835Z" fill="#00969a"/>
<circle cx="405" cy="750" r="107" fill="#fff" stroke="#444" stroke-width="2.5"/>
<path d="M369,675 L410,675 L449,716 L449,832 C425,860 390,865 369,850Z" fill="#00969a"/>
<path d="M118,655V628H160M367,648V628H405" stroke="#d84040" stroke-width="1.5" fill="none"/>
<text x="170" y="634" class="tiny" style="fill:#555">Detail A</text><text x="408" y="634" class="tiny" style="fill:#555">Detail G</text>

<!-- title block -->
<rect x="695" y="637" width="537" height="223" fill="#fff" stroke="#444" stroke-width="2"/>
<path d="M695,650H1078M695,664H1232M695,678H1078M695,702H1232M898,702V860M762,637V702M832,637V702M898,637V702M1078,637V702M898,758H1232M898,790H1232M898,812H1232M1145,812V860M1145,842H1232" stroke="#666" stroke-width="1.5" fill="none"/>
<path d="M705,657H755M705,671H755M775,645H820M775,657H820M775,671H820M845,645H885M845,671H885M912,645H960M912,657H975M912,671H975M1000,671H1035M1005,645H1015M1090,645H1115M1090,657H1135M705,750H740M705,762H740M705,775H740M770,762H880M770,775H840M705,805H735M705,820H735M705,832H735M705,845H735M770,805H840M770,820H840M770,832H845M770,845H845" stroke="#aaa" stroke-width="2"/>
<text x="712" y="730" style="font-size:44px;font-weight:700;font-style:italic;fill:#14387a;stroke:#14387a;stroke-width:1.5" textLength="88" lengthAdjust="spacingAndGlyphs">num</text>
<text x="800" y="730" style="font-size:44px;font-style:italic;fill:#7f9bc0" textLength="80" lengthAdjust="spacingAndGlyphs">roto.</text>
<text x="910" y="743" style="font-size:15px;fill:#555">Stufenbohrer-- (Scheiben)</text>
<text x="910" y="782" style="font-size:15px;fill:#555">19-03-1962</text>
<text x="910" y="810" style="font-size:15px;fill:#555">2</text>
</g>

<!-- right panel -->
<rect x="1219.5" y="174.5" width="201" height="634" fill="#fff" stroke="#a0a0a0" stroke-width="1.4"/>
<rect x="1224" y="179" width="169" height="18" rx="2" fill="#696969"/>
<text class="h" x="1228" y="192" textLength="31" lengthAdjust="spacingAndGlyphs">Ablage</text>
<rect x="1397" y="179.5" width="18" height="17.5" fill="#eee" stroke="#a8a8a8"/>
<path d="M1405,181.5V195L1399,188Z" fill="#9a9a9a"/><path d="M1407.5,181.5V195L1414,188Z" fill="#2a86d8"/>
<rect x="1224" y="201" width="191" height="2" fill="#6a6a6a"/>
<rect x="1224" y="207" width="191" height="18" fill="#8e8e8e"/>
<text class="d" x="1228" y="219" textLength="31" lengthAdjust="spacingAndGlyphs">Ablage</text>
<path d="M1224,207V805H1415V207" fill="none" stroke="#a8a8a8"/>
<rect x="1400" y="226" width="14" height="579" fill="#f1f1f1"/>
<rect x="1400" y="240" width="14" height="151" fill="#cdcdcd"/>
<path d="M1404,235L1407,232L1410,235M1404,796L1407,799L1410,796" stroke="#b0b0b0" fill="none"/>
<g clip-path="url(#rc)">
<g transform="translate(1220,230) scale(.3333)">
<path d="M45,176 L55,150 L128,150 L132,145 L205,145 L210,140 L380,140 L385,146 L505,146 L510,150 L510,205 L505,209 L385,209 L380,214 L210,214 L205,210 L132,206 L128,204 L55,204Z" fill="#fff" stroke="#444" stroke-width="3"/>
<path d="M312,140V214M380,140V214" stroke="#444" stroke-width="3"/>
<path d="M130,148V206M208,142V212M312,142V212" stroke="#3838d8" stroke-width="3"/>
<path d="M85,150 L205,205 M255,142 L312,165" stroke="#e8a0a0" stroke-width="2" fill="none"/>
<path d="M48,176H512" stroke="#6060e0" stroke-width="2" stroke-dasharray="40 6 6 6"/>
<path d="M55,168H312M55,186H312" stroke="#90b090" stroke-width="1.5" stroke-dasharray="5 5"/>
<circle cx="280" cy="597" r="160" fill="#fff" stroke="#222" stroke-width="5"/>
<circle cx="280" cy="597" r="150" fill="none" stroke="#222" stroke-width="4"/>
<path d="M180,500 A136,136 0 0 1 370,490 L388,505 M385,700 A136,136 0 0 1 190,705 M145,630 A136,136 0 0 1 150,550 M415,560 A136,136 0 0 1 412,640" fill="none" stroke="#111" stroke-width="5"/>
<circle cx="280" cy="597" r="113" fill="none" stroke="#111" stroke-width="5"/>
<path d="M290,487 C300,530 270,570 280,600 C290,640 270,680 275,708 M168,575 C200,595 260,590 280,600 C300,590 350,570 390,565 M175,628 C220,620 270,605 280,600 C310,605 370,610 392,615" stroke="#222" stroke-width="3.5" fill="none"/>
<path d="M225,580 C235,555 255,545 272,552 M335,615 C325,640 305,650 288,640" stroke="#222" stroke-width="3" fill="none"/>
<path d="M198,460 L205,488 M168,474 L185,492 M360,730 L375,708 M188,690L160,700 M410,555L438,548" stroke="#222" stroke-width="3"/>
</g>
<g transform="translate(1220,520) scale(.3333)">
<path d="M48,120 L110,135 L135,115 L205,115 L215,108 L318,120 L330,108 L385,108 L385,115 L510,115 L516,122 L516,172 L510,178 L385,178 L385,184 L320,184 L215,184 L130,170 L60,176 L45,172 L42,145Z" fill="#fff" stroke="#222" stroke-width="3.5"/>
<path d="M385,108V184M318,120L320,184M48,120L110,135L70,175M42,145L105,160L130,145L210,184M130,115L215,184M210,115L318,184M110,135L130,145M225,125L305,160" stroke="#222" stroke-width="3" fill="none"/>
<path d="M305,405 C345,425 420,465 435,558 C360,555 285,600 250,728 C210,715 135,685 122,577 C200,585 285,540 305,405Z" fill="#fff" stroke="#666" stroke-width="2.5"/>
<path d="M75,855 C85,830 110,825 125,830 L150,852" fill="none" stroke="#444" stroke-width="2.5"/>
</g>
<text x="1277" y="362" textLength="71" lengthAdjust="spacingAndGlyphs">Werkzeug Aufriss</text>
<text x="1233" y="501" textLength="160" lengthAdjust="spacingAndGlyphs">043--NR-Draw_Flash_Stufenbohrer_Fr...</text>
<text x="1231" y="641" textLength="164" lengthAdjust="spacingAndGlyphs">043--NR-Draw_Flash_Stufenbohrer_Lef...</text>
<text x="1235" y="781" textLength="156" lengthAdjust="spacingAndGlyphs">043--NR-Draw_Flash_Stufenbohrer.dxf</text>
</g>
</svg>
</body></html>
